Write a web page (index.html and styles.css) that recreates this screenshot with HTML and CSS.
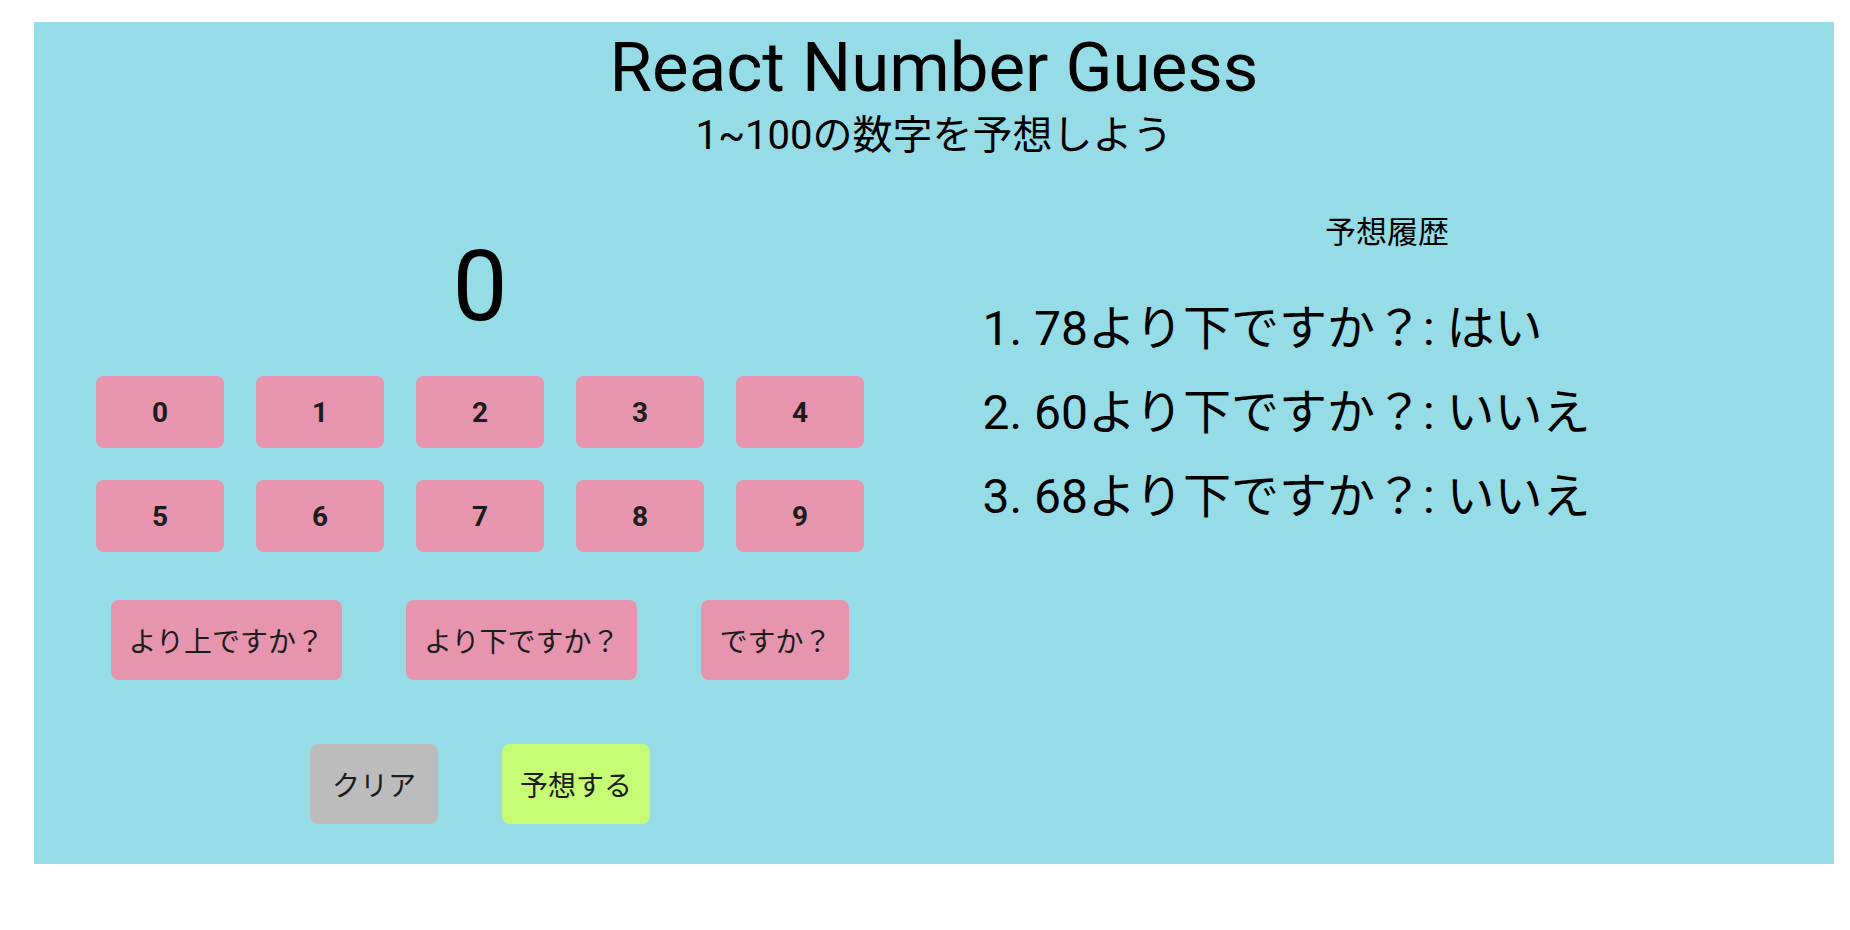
FILE: index.html
```html
<!DOCTYPE html>
<html lang="ja">
<head>
<meta charset="utf-8">
<title>React Number Guess</title>
<link rel="stylesheet" href="styles.css">
</head>
<body>
<div class="app">
  <h1 class="title">React Number Guess</h1>
  <p class="subtitle">1~100の数字を予想しよう</p>
  <div class="main">
    <section class="game">
      <div class="display">0</div>
      <div class="digits">
        <button class="btn digit">0</button>
        <button class="btn digit">1</button>
        <button class="btn digit">2</button>
        <button class="btn digit">3</button>
        <button class="btn digit">4</button>
        <button class="btn digit">5</button>
        <button class="btn digit">6</button>
        <button class="btn digit">7</button>
        <button class="btn digit">8</button>
        <button class="btn digit">9</button>
      </div>
      <div class="ops">
        <button class="btn op">より上ですか？</button>
        <button class="btn op">より下ですか？</button>
        <button class="btn op">ですか？</button>
      </div>
      <div class="actions">
        <button class="btn clear">クリア</button>
        <button class="btn guess">予想する</button>
      </div>
    </section>
    <section class="history">
      <h2 class="history-title">予想履歴</h2>
      <ol class="history-list">
        <li>78より下ですか？: はい</li>
        <li>60より下ですか？: いいえ</li>
        <li>68より下ですか？: いいえ</li>
      </ol>
    </section>
  </div>
</div>
</body>
</html>
```

FILE: styles.css
```css
html, body {
  margin: 0;
  padding: 0;
  background: #ffffff;
}

body {
  font-family: Roboto, "Noto Sans CJK JP", sans-serif;
  color: #000000;
}

.app {
  margin: 22px 16px 0 34px;
  height: 842px;
  box-sizing: border-box;
  padding-top: 6px;
  background: #96dce7;
}

.title {
  margin: 0;
  font-size: 69px;
  line-height: 80px;
  font-weight: 400;
  text-align: center;
}

.subtitle {
  margin: 6px 0 0;
  font-size: 40px;
  line-height: 43px;
  text-align: center;
}

.main {
  display: grid;
  grid-template-columns: 892px 1fr;
}

.game {
  display: flex;
  flex-direction: column;
  align-items: center;
}

.display {
  margin-top: 72px;
  font-size: 98px;
  line-height: 116px;
}

.digits {
  margin-top: 31px;
  display: grid;
  grid-template-columns: repeat(5, 128px);
  gap: 32px;
}

.btn {
  border: none;
  border-radius: 8px;
  font-family: Roboto, "Noto Sans CJK JP", sans-serif;
  font-size: 28px;
  color: #1c1c1c;
  padding: 0 18px;
  min-width: 128px;
  cursor: pointer;
  background: #e795ae;
}

.digit {
  height: 72px;
  font-weight: 700;
}

.ops {
  margin-top: 48px;
  display: flex;
  gap: 64px;
}

.op {
  height: 80px;
  font-weight: 400;
}

.actions {
  margin-top: 64px;
  display: flex;
  gap: 64px;
}

.clear,
.guess {
  height: 80px;
}

.clear {
  background: #bcbcbc;
}

.guess {
  background: #c6fc74;
}

.history {
  padding-left: 14px;
}

.history-title {
  margin: 58px 0 0;
  font-size: 31px;
  line-height: 36px;
  font-weight: 400;
  text-align: center;
}

.history-list {
  margin: 36px 0 0;
  padding-left: 94px;
  font-size: 48px;
}

.history-list li {
  line-height: 84px;
}
```
